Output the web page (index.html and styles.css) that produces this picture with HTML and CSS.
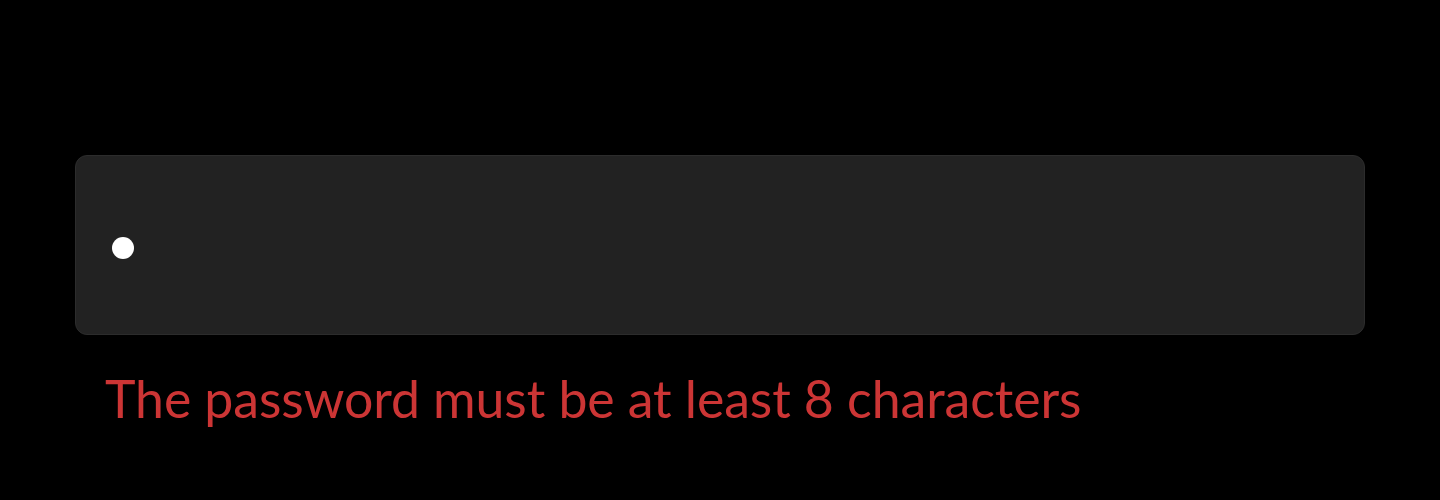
FILE: index.html
```html
<!DOCTYPE html>
<html>
<head>
<meta charset="utf-8">
<link rel="stylesheet" href="styles.css">
</head>
<body>
<div class="wrap">
  <div class="field">
    <span class="dot"></span>
  </div>
  <div class="error">The password must be at least 8 characters</div>
</div>
</body>
</html>
```
FILE: styles.css
```css
html, body {
  margin: 0;
  padding: 0;
  background: #000;
  height: 100%;
}
.wrap {
  padding: 155px 75px 0 75px;
  font-family: Lato, "Open Sans", sans-serif;
}
.field {
  box-sizing: border-box;
  height: 180px;
  background: #222222;
  border: 1px solid #2c2c2c;
  border-radius: 12px;
  display: flex;
  align-items: center;
  padding-left: 36px;
}
.dot {
  width: 22px;
  height: 22px;
  margin-top: 6px;
  border-radius: 50%;
  background: #fff;
}
.error {
  color: #cc3535;
  font-size: 51.8px;
  letter-spacing: -0.08px;
  line-height: 1;
  padding: 38px 0 0 30px;
}
```
